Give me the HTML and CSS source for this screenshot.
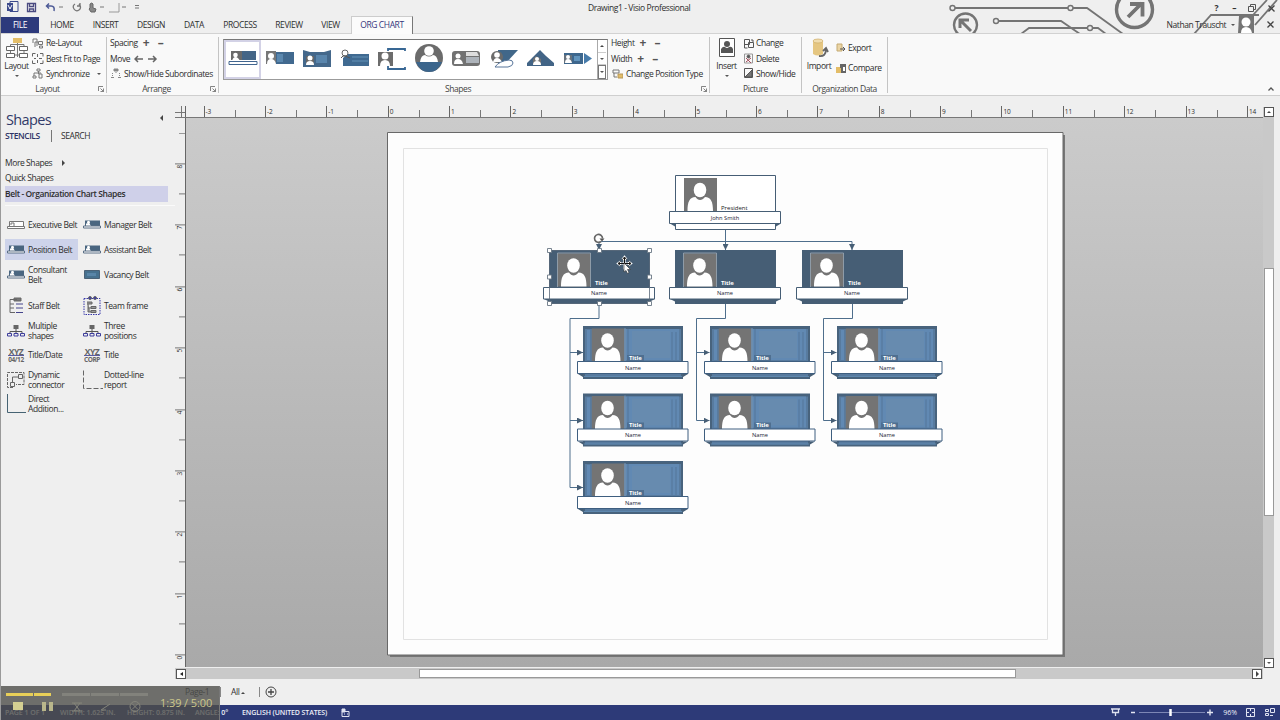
FILE: index.html
```
<!DOCTYPE html>
<html lang="en">
<head>
    <meta charset="UTF-8">
    <meta name="viewport" content="width=device-width, initial-scale=1.0">
    <title>Drawing1 - Visio Professional</title>
    <link rel="stylesheet" href="styles.css">
</head>
<body>
<svg class="sprite" width="0" height="0">
    <defs>
        <symbol id="person" viewBox="0 0 33 33">
            <rect width="33" height="33" fill="#747474"/>
            <path d="M3.500 33c0-9 2-14 8-14 2.500 4 6.500 4 9.500 0 6 0 8 5 8 14z" fill="#fff"/>
            <ellipse cx="16" cy="12" rx="6.300" ry="7.300" fill="#fff"/>
        </symbol>
        <symbol id="belt" viewBox="0 0 18 9">
            <path d="M2 .5h15v6H2z" fill="#4a6680"/>
            <path d="M3 6V3.500h1.500a1.500 1.500 0 1 1 2 0L8 6z" fill="#fff"/>
            <path d="M.5 6h17v2H.5z" fill="#fff" stroke="#5a6f85"/>
        </symbol>
        <symbol id="boxes" viewBox="0 0 18 12">
            <path d="M6.500 0h5v4h-5z" fill="#666"/>
            <path d="M9 4v4M3 9V6.500h12V9" fill="none" stroke="#555"/>
            <path d="M.5 8.500h4v2.500h-4zM7 8.500h4v2.500H7zM13.500 8.500h4v2.500h-4z" fill="#eee" stroke="#3d3d9c"/>
        </symbol>
        <symbol id="launcher" viewBox="0 0 6 6">
            <path d="M.5 5V.5H5M2.500 2.500l3 3M5.500 2.500v3h-3" fill="none" stroke="#666" stroke-width=".8"/>
        </symbol>
        <g id="manager">
            <path d="M6 0h101v54H6z" fill="#465e75"/>
            <use href="#person" x="14.500" y="3" width="33" height="34"/>
            <path d="M14.500 37V3H47.500v34" fill="none" stroke="#a9b3bd" stroke-width=".7"/>
            <path d="M1 49h5v2.500zM112 49h-5v2.500z" fill="#465e75"/>
            <path d="M.5 37.500h111v11.500H.5z" fill="#fff" stroke="#465e75"/>
            <text class="node-title" x="52" y="35">Title</text>
            <text class="node-name" x="56" y="44.500">Name</text>
        </g>
        <g id="position">
            <path d="M6 0h100v53H6z" fill="#48637d"/>
            <path d="M8 3h96v48H8z" fill="#587b9f"/>
            <path d="M10 4h3v30h-3zM49 3h53v31H49z" fill="#6189b3"/>
            <path d="M55 5h38v27H55z" fill="#678baf"/>
            <path d="M51 3v28M95 6v28M99 6v28" fill="none" stroke="#4e6f90" stroke-width=".7"/>
            <path d="M50 29h17v6H50z" fill="#4f6f90"/>
            <use href="#person" x="14.500" y="2" width="33" height="34"/>
            <path d="M48 2v34" stroke="#8fb0ce" stroke-width=".7"/>
            <path d="M1 48h5v3zM111 48h-5v3z" fill="#465e75"/>
            <path d="M.5 35.500h110.500v12H.5z" fill="#fff" stroke="#3f5f80"/>
            <path d="M7 50.500h98" stroke="#5f88ae"/>
            <text class="node-title" x="52" y="33.700">Title</text>
            <text class="node-name" x="56" y="43.500">Name</text>
        </g>
        <marker id="arrow" viewBox="0 0 6 6" refX="6" refY="3" markerWidth="6" markerHeight="6" markerUnits="userSpaceOnUse" orient="auto">
            <path d="M0 0l6 3-6 3z" fill="#465e75"/>
        </marker>
    </defs>
</svg>

<div class="app">
    <header class="titlebar">
        <svg class="circuit" viewBox="940 0 340 33" width="340" height="33">
            <g fill="none" stroke="#747474" stroke-width="1.800">
                <path d="M955 8h113M1073 8h14l36 26M999 21h62l19 13M1021 34l8-6h59M1093 28h5l8 6M1194 34l17-19h48M1253 15l14-15M1255 25l22-25"/>
                <g stroke-width="1.400">
                    <circle cx="952.500" cy="8" r="2.500"/>
                    <circle cx="1070.500" cy="8" r="2.500"/>
                    <circle cx="996" cy="21" r="2.500"/>
                    <circle cx="1090" cy="28" r="2.500"/>
                </g>
                <circle cx="965.500" cy="25" r="11.500" stroke-width="2.400"/>
                <path d="M971 31l-11-11M960 28v-8h9" stroke-width="3"/>
                <circle cx="1134.500" cy="9.500" r="18" stroke-width="3.400"/>
                <path d="M1128 17l14-14M1130 4h12.500v12.500" stroke-width="3.800"/>
            </g>
            <path d="M1239 16h15v17h-16z" fill="#747474"/>
            <circle cx="1246" cy="22" r="4.500" fill="#fff"/>
            <path d="M1241 33q0-6 5-6t6 6z" fill="#fff"/>
        </svg>
        <div class="quick-access">
            <svg width="145" height="14" viewBox="0 0 145 14" fill="none" stroke="#555">
                <path d="M9 1.500h8v10H9z" stroke="#3c4a8c"/>
                <path d="M6 3h6v8H6z" fill="#3c4a8c" stroke="none"/>
                <path d="M7 5l2 4 2-4" stroke="#fff"/>
                <path d="M26.500 3.500h8v8h-8zM28.500 3.500v3h4v-3M28.500 11v-2h4v2" stroke="#4a4a80" stroke-width="1.300"/>
                <path d="M48 3.500l-2.500 2.500L48 8.500M46 6h4q4 0 3 5" stroke="#4d5a96" stroke-width="1.500"/>
                <path d="M58 7h4M99 7h4M121 7h4M134 5.500h4M134 8h4" stroke="#777"/>
                <path d="M74 4q-3 2-1 5t5 1 0-6M79 3v3h-3" stroke="#777" stroke-width="1.300"/>
                <path d="M89 8V4q2-2 3 0v4l3 1-1 3h-4l-2-3z" fill="#888" stroke="#666"/>
                <path d="M108 12h10V3" stroke="#999"/>
            </svg>
        </div>
        <div class="window-title">Drawing1 - Visio Professional</div>
        <div class="window-buttons">
            <b>?</b><b>–</b>
            <svg width="8" height="8" fill="none" stroke="#555"><path d="M2.500 2.500v-2h5v5h-2M.5 2.500h5v5h-5z"/></svg>
            <svg width="7" height="7" stroke="#444" stroke-width="1.300"><path d="M.5.5l6 6M6.500.5l-6 6"/></svg>
        </div>
    </header>

    <nav class="tabs">
        <span class="tab tab-file">FILE</span>
        <span class="tab tab-home">HOME</span>
        <span class="tab tab-insert">INSERT</span>
        <span class="tab tab-design">DESIGN</span>
        <span class="tab tab-data">DATA</span>
        <span class="tab tab-process">PROCESS</span>
        <span class="tab tab-review">REVIEW</span>
        <span class="tab tab-view">VIEW</span>
        <span class="tab tab-active">ORG CHART</span>
        <span class="account">Nathan Trauscht <i class="caret"></i></span>
        <svg class="close-doc" width="7" height="7" stroke="#444" stroke-width="1.300"><path d="M.5.5l6 6M6.500.5l-6 6"/></svg>
    </nav>

    <section class="ribbon">
        <div class="group group-layout">
            <div class="group-body">
                <div class="big-button">
                    <svg width="22" height="23" fill="none" stroke="#777">
                        <path d="M7 1h9v5H7z" fill="#e3bd68" stroke="none"/>
                        <path d="M11.500 6v14M4.500 9V7.500H18V9M4.500 13v3M18 13v3M9 18h5"/>
                        <path d="M.5 9.500h8v4h-8zM13.500 9.500h8v4h-8zM.5 16.500h8v4h-8zM13.500 16.500h8v4h-8z" fill="#fff" stroke="#666"/>
                    </svg>
                    <span>Layout</span><i class="caret"></i>
                </div>
                <div class="rows">
                    <div class="row"><svg width="12" height="11" fill="none" stroke="#777"><path d="M1 5V1h4M3 9V4h3M6.500 3.500h4v3h-4zM7.500 8h3v2h-3zM5 1v7"/></svg>Re-Layout</div>
                    <div class="row"><svg width="12" height="11" fill="none" stroke="#666"><path d="M.5 3.500v-3h3M8 .5h3v3M11 7.500v3H8M3.500 10.500h-3v-3M5.500 1v3M5.500 7v3M2 5.500h2M7 5.500h3"/></svg>Best Fit to Page</div>
                    <div class="row"><svg width="12" height="11" fill="none" stroke="#777"><path d="M5 1h3v2H5zM1 8h3v2H1zM7 6h3v4H7zM6.500 3v3M2 8V5h7"/></svg>Synchronize <i class="caret sync-caret"></i></div>
                </div>
            </div>
            <div class="group-label">Layout</div>
            <svg class="launcher"><use href="#launcher"/></svg>
        </div>

        <div class="group group-arrange">
            <div class="group-body">
                <div class="rows">
                    <div class="row">Spacing <b class="sign">+</b><b class="sign">–</b></div>
                    <div class="row">Move <svg class="arrows" width="24" height="8" fill="none" stroke="#666" stroke-width="1.500"><path d="M9 4H1M4 1L1 4l3 3M14 4h8M19 1l3 3-3 3"/></svg></div>
                    <div class="row"><svg class="subordinates" width="12" height="11" fill="none" stroke="#888"><path d="M4 1h4v2H4z" fill="#888"/><path d="M2.500 5v3M6 4v2M9.500 5v3" stroke-dasharray="1 1"/><path d="M1 9.500h3M8 9.500h3"/></svg>Show/Hide Subordinates</div>
                </div>
            </div>
            <div class="group-label">Arrange</div>
            <svg class="launcher"><use href="#launcher"/></svg>
        </div>

        <div class="group group-shapes">
            <div class="group-body">
                <div class="gallery">
                    <div class="style selected"><svg width="30" height="30"><path d="M3 8h25v9H3z" fill="#446586"/><path d="M3 8h11v9H3z" fill="#6a6a6a"/><circle cx="7.500" cy="12" r="2.300" fill="#fff"/><path d="M4 18q1-4 3.500-4t4.500 4z" fill="#fff"/><path d="M1 18.500h28v3H1z" fill="#fff" stroke="#41658f"/></svg></div>
                    <div class="style"><svg width="30" height="30"><path d="M1 8h10v13H1z" fill="#777"/><path d="M11 9h18v12H11z" fill="#41698f"/><circle cx="6" cy="13" r="3" fill="#fff"/><path d="M2 21q0-5 4-5t5 5z" fill="#fff"/><path d="M12 11h6v8h-6z" fill="#5a87ae"/></svg></div>
                    <div class="style"><svg width="30" height="30"><path d="M1 7l7 2h14l7-2v17H1z" fill="#44688b"/><path d="M4 13h8v9H4z" fill="#666"/><circle cx="8" cy="15" r="2.500" fill="#fff"/><path d="M4 22q0-4 4-4t4 4z" fill="#fff"/><path d="M14 12h11v8H14z" fill="#5985ac"/></svg></div>
                    <div class="style"><svg width="30" height="30"><path d="M8 11h21v12H3v-8z" fill="#406a91"/><path d="M12 14h16M12 18h16" stroke="#6391b6"/><circle cx="5" cy="10" r="3" fill="#fff" stroke="#666"/><path d="M1 15q2-3 4-2l5 2" fill="none" stroke="#555"/></svg></div>
                    <div class="style"><svg width="30" height="30"><path d="M1 9h15v14H1z" fill="#6c6c6c"/><circle cx="8" cy="13" r="3.500" fill="#fff"/><path d="M3 23q0-6 5-6t5 6z" fill="#fff"/><path d="M11 8V6h17v2M11 23v3h17v-2" fill="none" stroke="#386794" stroke-width="1.800"/></svg></div>
                    <div class="style"><svg width="30" height="30"><circle cx="15" cy="15" r="14" fill="#6b6b6b"/><path d="M2 19h26q-4 10-13 10T2 19z" fill="#3b658c"/><circle cx="15" cy="8" r="4.800" fill="#fff"/><path d="M6 19q1-7 5-7 4 3 8 0 4 0 5 7z" fill="#fff"/></svg></div>
                    <div class="style"><svg width="30" height="30"><rect x="1" y="8" width="28" height="15" rx="3" fill="#727272"/><circle cx="7" cy="13" r="2.500" fill="#fff"/><path d="M3 21q0-5 4-5t5 5z" fill="#fff"/><path d="M15 9h11l2 4H15z" fill="#ddd"/><path d="M15 14h13v6H15z" fill="#adb3ba"/></svg></div>
                    <div class="style"><svg width="30" height="30"><path d="M9 7h20L17 20H9z" fill="#416789"/><circle cx="8" cy="14" r="6" fill="#6b6b6b"/><circle cx="8" cy="12" r="2.800" fill="#fff"/><path d="M4 19q1-4 4-4t5 4z" fill="#fff"/><path d="M20 17q4 0 4 3t-5 4H6q4-6 14-7z" fill="#fff" stroke="#57759a"/></svg></div>
                    <div class="style"><svg width="30" height="30"><path d="M14 7l6 6 8 7v3H1v-3l6-6z" fill="#426486"/><path d="M7 16l3-3 5 3v6H7z" fill="#727272"/><circle cx="11" cy="16" r="2" fill="#fff"/><path d="M7 22q0-4 4-4t4 4z" fill="#fff"/></svg></div>
                    <div class="style"><svg width="30" height="30"><path d="M1 10h19v11H1z" fill="#3e678d"/><path d="M21 10l8 5.500-8 5.500z" fill="#477baa"/><path d="M1 12h8v8H1z" fill="#66717c"/><circle cx="5" cy="14" r="2" fill="#fff"/><path d="M2 20q0-4 3-4t4 4z" fill="#fff"/><path d="M11 13h6v5h-6z" fill="#6194bd"/></svg></div>
                    <div class="gallery-nav"><span><i class="caret up"></i></span><span><i class="caret"></i></span><span class="more"><i class="caret"></i></span></div>
                </div>
                <div class="rows rows-size">
                    <div class="row">Height <b class="sign">+</b><b class="sign">–</b></div>
                    <div class="row">Width <b class="sign">+</b><b class="sign">–</b></div>
                    <div class="row"><svg class="change-type" width="11" height="10" fill="none" stroke="#777"><path d="M1 1h6v3H1zM2 4v4h3"/><path d="M6 5h5v4H6z" fill="#e3bd68" stroke="#b8995a"/></svg>Change Position Type</div>
                </div>
            </div>
            <div class="group-label">Shapes</div>
            <svg class="launcher"><use href="#launcher"/></svg>
        </div>

        <div class="group group-picture">
            <div class="group-body">
                <div class="big-button">
                    <svg width="22" height="23"><path d="M3.500 1.500h15v18h-15z" fill="#fff" stroke="#555"/><circle cx="11" cy="7" r="3" fill="#555"/><path d="M5 16v-4q2-3 4-2 2 2 4 0 3-1 4 2v4z" fill="#555"/></svg>
                    <span>Insert</span><i class="caret"></i>
                </div>
                <div class="rows">
                    <div class="row"><svg width="12" height="11" fill="none" stroke="#555"><path d="M1.500 1.500h5v5h-5zM5.500 4.500h5v5h-5zM1.500 6v4h3M8 2h2v2"/></svg>Change</div>
                    <div class="row"><svg width="12" height="11" fill="none" stroke="#666"><path d="M1.500 1v9h8V1z" stroke="#999"/><circle cx="5.500" cy="3.500" r="1.500" fill="#555"/><path d="M3 9l5-4M3 5l5 5" stroke="#a34d5b"/></svg>Delete</div>
                    <div class="row"><svg width="12" height="11" fill="none" stroke="#555"><path d="M1.500.5h8v9h-8z"/><path d="M2 9l7-7v7z" fill="#777"/></svg>Show/Hide</div>
                </div>
            </div>
            <div class="group-label">Picture</div>
        </div>

        <div class="group group-data">
            <div class="group-body">
                <div class="big-button">
                    <svg width="22" height="23"><path d="M5 4v13q5 3 10 0V4z" fill="#e5c681"/><ellipse cx="10" cy="4" rx="5" ry="2" fill="#f0dcae" stroke="#cfae67" stroke-width=".7"/><path d="M11 19q7 1 7-7M15 14l3-3 2 4" fill="none" stroke="#666" stroke-width="1.800"/></svg>
                    <span>Import</span>
                </div>
                <div class="rows rows-data">
                    <div class="row"><svg width="12" height="11" fill="none"><path d="M2 2h5v7H2z" fill="#ebd5a5" stroke="#c4aa73"/><path d="M5 7h5M8 5l2 2-2 2" stroke="#555"/></svg>Export</div>
                    <div class="row"><svg width="12" height="11"><path d="M1 4h5v6H1z" fill="#e3bd68"/><path d="M5 1h6v9H6V5H5z" fill="#666"/><path d="M8 4h2v4H8z" fill="#fff"/></svg>Compare</div>
                </div>
            </div>
            <div class="group-label">Organization Data</div>
        </div>
        <svg class="collapse" width="6" height="4" fill="none" stroke="#555" stroke-width="1.300"><path d="M.5 3.500L3 1l2.500 2.500"/></svg>
    </section>

    <main class="workspace">
        <aside class="sidebar">
            <div class="sidebar-head"><h2>Shapes</h2><i class="collapse-left"></i></div>
            <div class="sidebar-tabs"><b>STENCILS</b><span>SEARCH</span></div>
            <div class="sidebar-line">More Shapes <i class="caret right"></i></div>
            <div class="sidebar-line">Quick Shapes</div>
            <div class="stencil-name">Belt - Organization Chart Shapes</div>
            <div class="stencils">
                <div class="stencil"><svg width="18" height="20"><path d="M2.500 6.500h14v5h-14zM.5 11.500h17v2H.5zM4 8h3M4 10v-2M7 8v3" fill="#fff" stroke="#777"/></svg>Executive Belt</div>
                <div class="stencil"><svg width="18" height="9"><use href="#belt"/></svg>Manager Belt</div>
                <div class="stencil current"><svg width="18" height="9"><use href="#belt"/></svg>Position Belt</div>
                <div class="stencil"><svg width="18" height="9"><use href="#belt"/></svg>Assistant Belt</div>
                <div class="stencil"><svg width="18" height="9"><use href="#belt"/></svg><span>Consultant<br>Belt</span></div>
                <div class="stencil"><svg width="18" height="11"><path d="M1.500 1.500h15v8h-15z" fill="#47718f" stroke="#4b6176"/><path d="M4 4h9v3H4z" fill="#5985a8"/></svg>Vacancy Belt</div>
                <div class="stencil first-of-kind"><svg width="18" height="18" fill="none" stroke="#666"><path d="M7 1h7v3H7z" fill="#777"/><path d="M10 2.500H3v13h5M3 7h4M3 11h4"/><path d="M9 7h7M9 11h7M9 15.500h7" stroke="#44448c"/></svg>Staff Belt</div>
                <div class="stencil first-of-kind"><svg width="18" height="20" fill="none" stroke="#666"><path d="M1 2.500h16v16H1z" stroke="#3737a8" stroke-dasharray="1.500 1"/><path d="M4 6h5v2H4M5 8v8h3M5 12h3M8 10.500h5v2H8zM8 14.500h5v2H8z" fill="#999"/><circle cx="7" cy="2" r="1.500" fill="#3535b0"/><circle cx="12" cy="2" r="1.500" fill="#3535b0"/></svg>Team frame</div>
                <div class="stencil"><svg width="18" height="12"><use href="#boxes"/></svg><span>Multiple<br>shapes</span></div>
                <div class="stencil"><svg width="18" height="12"><use href="#boxes"/></svg><span>Three<br>positions</span></div>
                <div class="stencil"><span class="xyz"><b>XYZ</b><b>04/12</b></span>Title/Date</div>
                <div class="stencil"><span class="xyz"><b>XYZ</b><b>CORP</b></span>Title</div>
                <div class="stencil"><svg width="18" height="18" fill="none" stroke="#666"><path d="M7 1.500H.5v15h6M8 1.500h9v12H9" stroke-dasharray="3 1"/><path d="M11.500 3.500h4v4h-4zM3.500 11.500h4v4h-4zM5.500 11V6h6"/></svg><span>Dynamic<br>connector</span></div>
                <div class="stencil"><svg width="20" height="20" fill="none" stroke="#666"><path d="M.5.5v18H20" stroke-dasharray="5 2"/></svg><span>Dotted-line<br>report</span></div>
                <div class="stencil"><svg width="19" height="20" fill="none" stroke="#466373"><path d="M.5 0v18.500H19"/></svg><span>Direct<br>Addition...</span></div>
            </div>
        </aside>

        <div class="editor">
            <div class="ruler-top">
                <span class="ruler-corner"></span>
                <span class="inch">-3</span><span class="inch">-2</span><span class="inch">-1</span><span class="inch">0</span><span class="inch">1</span><span class="inch">2</span><span class="inch">3</span><span class="inch">4</span><span class="inch">5</span><span class="inch">6</span><span class="inch">7</span><span class="inch">8</span><span class="inch">9</span><span class="inch">10</span><span class="inch">11</span><span class="inch">12</span><span class="inch">13</span><span class="inch">14</span>
            </div>
            <div class="canvas-row">
                <div class="ruler-left">
                    <span class="inch">8</span><span class="inch">7</span><span class="inch">6</span><span class="inch">5</span><span class="inch">4</span><span class="inch">3</span><span class="inch">2</span><span class="inch">1</span><span class="inch">0</span>
                </div>
                <svg class="canvas" viewBox="186 118 1077 549" width="1077" height="549">
                    <defs>
                        <linearGradient id="desk" x1="0" y1="0" x2="0" y2="1">
                            <stop offset="0" stop-color="#cbcbcb"/>
                            <stop offset="1" stop-color="#a9a9a9"/>
                        </linearGradient>
                    </defs>
                    <rect x="186" y="118" width="1077" height="549" fill="url(#desk)"/>
                    <path d="M390 135h675v522H390z" fill="#767676"/>
                    <path d="M387.500 132.500h675.500v522.500H387.500z" fill="#fdfdfd" stroke="#686868"/>
                    <path d="M403.500 148.500h644v491h-644z" fill="none" stroke="#e2e2e2"/>

                    <!-- connectors -->
                    <g class="wires">
                        <path d="M725.500 230v20" marker-end="url(#arrow)"/>
                        <path d="M725.500 241.500H599V250" marker-end="url(#arrow)"/>
                        <path d="M725.500 241.500H852V250" marker-end="url(#arrow)"/>
                        <path d="M599 304v14.500h-29V487.500h13" marker-end="url(#arrow)"/>
                        <path d="M570 352.500h13" marker-end="url(#arrow)"/>
                        <path d="M570 420.500h13" marker-end="url(#arrow)"/>
                        <path d="M725.500 304v14.500h-29V420.500h13" marker-end="url(#arrow)"/>
                        <path d="M696.500 352.500h13" marker-end="url(#arrow)"/>
                        <path d="M852.500 304v14.500h-29V420.500h13" marker-end="url(#arrow)"/>
                        <path d="M823.500 352.500h13" marker-end="url(#arrow)"/>
                    </g>

                    <!-- president -->
                    <path d="M675.500 175.500h100v54h-100z" fill="#fff" stroke="#465e75"/>
                    <use href="#person" x="684" y="178" width="33" height="33"/>
                    <path d="M670 223.500h5v3zM781 223.500h-5v3z" fill="#465e75"/>
                    <path d="M669.500 211.500h111v12h-111z" fill="#fff" stroke="#465e75"/>
                    <text class="node-role" x="721" y="209.500">President</text>
                    <text class="node-name" x="725" y="219.500">John Smith</text>

                    <use href="#manager" x="543" y="250"/>
                    <use href="#manager" x="669" y="250"/>
                    <use href="#manager" x="796" y="250"/>

                    <use href="#position" x="577" y="326"/>
                    <use href="#position" x="704" y="326"/>
                    <use href="#position" x="831" y="326"/>
                    <use href="#position" x="577" y="393.500"/>
                    <use href="#position" x="704" y="393.500"/>
                    <use href="#position" x="831" y="393.500"/>
                    <use href="#position" x="577" y="461"/>

                    <!-- selection -->
                    <path d="M549.500 250.500h100v53h-100z" fill="none" stroke="#5a6a7a" stroke-width=".8"/>
                    <g fill="#fff" stroke="#6a7784" stroke-width=".9">
                        <path d="M547.500 248.500h4v4h-4zM597.500 248.500h4v4h-4zM647.500 248.500h4v4h-4zM547.500 275h4v4h-4zM647.500 275h4v4h-4zM547.500 301.500h4v4h-4zM597.500 301.500h4v4h-4zM647.500 301.500h4v4h-4z"/>
                    </g>
                    <path d="M601 241.500a4 4 0 1 1 1.500-3" fill="#fff" stroke="#666" stroke-width="1.700"/>
                    <path d="M599.500 238.500h5l-2.500 3z" fill="#555"/>
                    <g class="cursor">
                        <path d="M624.500 257.500v12M618.500 263.500h12M622.500 259.500l2-2.500 2 2.500M620.500 261.500l-2.500 2 2.500 2M628.500 261.500l2.500 2-2.500 2" fill="none" stroke="#fff" stroke-width="2.200"/>
                        <path d="M624.500 257.500v12M618.500 263.500h12M622.500 259.500l2-2.500 2 2.500M620.500 261.500l-2.500 2 2.500 2M628.500 261.500l2.500 2-2.500 2" fill="none" stroke="#111"/>
                        <path d="M624 263v9l2-1.500 1.500 3 1.500-1-1.500-3h3z" fill="#fff" stroke="#333" stroke-width=".6"/>
                    </g>
                </svg>
            </div>
            <div class="scroll-h">
                <span class="scroll-button"><i class="caret left"></i></span>
                <span class="thumb"></span>
                <span class="scroll-button"><i class="caret right"></i></span>
            </div>
            <div class="page-tabs">
                <span class="page-one">Page-1</span>
                <span class="page-all">All <i class="caret up"></i></span>
                <svg width="12" height="12" fill="none" stroke="#444"><circle cx="6" cy="6" r="5"/><path d="M6 3v6M3 6h6" stroke-width="1.300"/></svg>
            </div>
        </div>

        <div class="scroll-v">
            <span class="scroll-button"><i class="caret up"></i></span>
            <span class="thumb"></span>
            <span class="scroll-button"><i class="caret"></i></span>
        </div>
    </main>

    <footer class="statusbar">
        <span class="st-page">PAGE 1 OF 1</span>
        <span class="st-width">WIDTH: 1.625 IN.</span>
        <span class="st-height">HEIGHT: 0.875 IN.</span>
        <span class="st-angle">ANGLE: 0°</span>
        <span class="st-lang">ENGLISH (UNITED STATES)</span>
        <svg width="9" height="9" fill="none" stroke="#dfe2f0"><path d="M1 3.500h7v5H1zM3 6h1M6 6h1"/><path d="M1 1h3v3H1z" fill="#dfe2f0"/></svg>
        <div class="zoom">
            <svg width="10" height="9" fill="none" stroke="#dfe2f0"><path d="M0 1h9M1.500 1v3.500h6V1M4.500 5v3" stroke-width="1.300"/></svg>
            <svg class="zoom-slider" width="84" height="9" stroke="#e4e6f2"><path d="M0 4.500h4M76 4.500h6M79 1.500v6" stroke-width="1.400"/><path d="M8 4.500h66" stroke="#7d87b5"/><path d="M39.500 1v7" stroke="#fff" stroke-width="2.500"/></svg>
            <span class="zoom-value">96%</span>
            <svg width="10" height="9" fill="none" stroke="#dfe2f0"><path d="M.5.5h8v8h-8zM4.500 0v3M4.500 6v3M0 4.500h3M6 4.500h3"/></svg>
            <svg class="switch" width="10" height="9" fill="none" stroke="#dfe2f0"><path d="M.5 1.500h3v2h-3zM5.500.5h4v4h-4zM.5 5.500h3v2h-3zM5 7.500h3"/></svg>
        </div>
    </footer>

    <div class="player">
        <div class="progress"><i class="played"></i><i class="played short"></i><i></i><i></i><i></i></div>
        <div class="controls">
            <svg width="150" height="16" fill="none" stroke="#85857b">
                <path d="M13 6h10v8H13z" fill="#d4cf92" stroke="none"/>
                <path d="M42 6h4v9h-4zM49 6h4v9h-4z" fill="#b9b68b" stroke="none"/>
                <path d="M72 7h10M72 15h10M74 7l6 8M80 7l-6 8M101 14l9-6M102 14h4"/>
                <circle cx="135" cy="10.500" r="5"/><path d="M132 7.500l6 6M138 7.500l-6 6"/>
            </svg>
            <span class="time">1:39 / 5:00</span>
        </div>
    </div>
</div>
</body>
</html>
```
FILE: styles.css
```
* {
    box-sizing: border-box;
}
body {
    margin: 0;
    font-family: "Open Sans", "Noto Sans", sans-serif;
    font-size: 8.5px;
    font-weight: 500;
    line-height: 10px;
    letter-spacing: -0.42px;
    color: #2e2e2e;
}
svg {
    flex: none;
    display: block;
}
.sprite {
    position: absolute;
}
.app {
    position: relative;
    width: 1280px;
    height: 720px;
    overflow: hidden;
    display: flex;
    flex-direction: column;
    background: #efefef;
    border-left: 1px solid #9a9a9a;
}

/* carets */
.caret {
    flex: none;
    display: inline-block;
    border: 2px solid transparent;
    border-top: 2.5px solid #555;
    border-bottom: 0;
}
.caret.up {
    border-top: 0;
    border-bottom: 2.5px solid #444;
}
.caret.right {
    border: 3px solid transparent;
    border-left: 3.5px solid #444;
    border-right: 0;
}
.caret.left {
    border: 2.5px solid transparent;
    border-right: 3px solid #222;
    border-left: 0;
}

/* title bar and tabs */
.titlebar {
    height: 17px;
    display: flex;
    align-items: flex-start;
}
.circuit {
    position: absolute;
    right: 0;
    top: 0;
}
.quick-access {
    width: 587px;
}
.window-title {
    padding-top: 3px;
    flex: 1;
}
.window-buttons {
    position: relative;
    display: flex;
    gap: 12px;
    align-items: center;
    padding: 3px 5px 0 0;
}
.window-buttons b:first-child {
    margin-right: 2px;
}
.tabs {
    position: relative;
    height: 16px;
    display: flex;
    line-height: 16px;
}
.tab {
    text-align: center;
    flex: none;
}
.tab-file {
    width: 38px;
    background: #2d3a7c;
    color: #fff;
}
.tab-home { width: 46px; }
.tab-insert { width: 41px; }
.tab-design { width: 50px; }
.tab-data { width: 36px; }
.tab-process { width: 56px; }
.tab-review { width: 42px; }
.tab-view { width: 41px; }
.tab-active {
    width: 62px;
    margin-top: -1px;
    height: 18px;
    background: #fbfbfb;
    border: 1px solid #ccc;
    border-right-color: #777;
    border-bottom: 0;
    color: #35367c;
    z-index: 1;
}
.account {
    flex: 1;
    text-align: right;
}
.account .caret {
    margin: 0 0 2px 3px;
}
.close-doc {
    margin: 4px 6px 0 32px;
}

/* ribbon */
.ribbon {
    position: relative;
    height: 63px;
    display: flex;
    background: #f9f9f9;
    border-top: 1px solid #d2d2d2;
    border-bottom: 1px solid #cfcfcf;
}
.group {
    position: relative;
    height: 56px;
    margin-top: 3px;
    border-right: 1px solid #c4c4c4;
}
.group-layout { width: 106px; }
.group-arrange { width: 112px; }
.group-shapes { width: 491px; }
.group-picture { width: 92px; }
.group-data { width: 86px; }
.group-body {
    display: flex;
    height: 46px;
}
.group-label {
    text-align: center;
    line-height: 11px;
    padding-right: 12px;
    color: #444;
}
.group-picture .group-label,
.group-data .group-label {
    padding-right: 0;
}
.launcher {
    position: absolute;
    width: 6px;
    height: 6px;
    right: 2px;
    bottom: 1px;
}
.big-button {
    display: flex;
    flex-direction: column;
    align-items: center;
    width: 31px;
}
.big-button span {
    line-height: 12px;
}
.big-button .caret {
    margin-top: 3px;
}
.rows {
    display: flex;
    flex-direction: column;
    margin-top: -1.5px;
}
.row {
    height: 15.4px;
    display: flex;
    align-items: center;
    white-space: nowrap;
}
.group-layout .row svg {
    margin-right: 2px;
}
.sync-caret {
    margin-left: 7px;
}
.group-arrange .rows {
    padding-left: 3px;
}
.sign {
    font-size: 12px;
    color: #555;
    width: 8px;
    margin-left: 5px;
    margin-right: 2px;
}
.arrows {
    margin-left: 4px;
}
.subordinates {
    margin-right: 2px;
}
.gallery {
    width: 385px;
    height: 41px;
    margin: 2px 3px 0 4px;
    display: flex;
    background: #fff;
    border: 1px solid #9b9b9b;
    border-top-color: #777;
}
.style {
    width: 37.3px;
    display: flex;
    justify-content: center;
    padding: 3px 0 0;
}
.style.selected {
    border: 2px solid #d3d2e6;
    padding-top: 1px;
}
.gallery-nav {
    width: 9px;
    border-left: 1px solid #aaa;
    display: flex;
    flex-direction: column;
}
.gallery-nav span {
    flex: 1;
    display: flex;
    align-items: center;
    justify-content: center;
    border-bottom: 1px solid #ccc;
}
.gallery-nav .more {
    border: 1px solid #777;
}
.change-type {
    margin: 0 3px 0 1px;
}
.group-picture .big-button {
    width: 33px;
}
.group-picture .row svg {
    margin-right: 1px;
}
.group-data .big-button {
    width: 34px;
}
.rows-data {
    gap: 5px;
    padding-top: 4.5px;
}
.rows-data .row svg {
    margin-right: 0;
}
.rows-data .row:first-child svg {
    margin-left: -1px;
    margin-right: 1px;
}
.rows-data .row:last-child svg {
    margin-left: -1px;
    margin-right: 1px;
}
.collapse {
    position: absolute;
    right: 6px;
    bottom: 4px;
}

/* sidebar */
.workspace {
    height: 609px;
    display: flex;
}
.sidebar {
    width: 174px;
    padding-left: 4px;
}
.sidebar-head {
    display: flex;
    justify-content: space-between;
    padding-top: 14px;
}
.sidebar-head h2 {
    margin: 0 0 0 1px;
    font-size: 14.5px;
    font-weight: 400;
    line-height: 20px;
    letter-spacing: -0.65px;
    color: #313a68;
}
.collapse-left {
    border: 3px solid transparent;
    border-right: 3px solid #444;
    border-left: 0;
    height: 6px;
    margin: 5px 12px 0 0;
}
.sidebar-tabs {
    display: flex;
    margin: 0 0 13px;
    line-height: 12px;
}
.sidebar-tabs b {
    color: #2e3467;
    font-weight: 600;
    width: 47px;
    border-right: 1px solid #777;
}
.sidebar-tabs span {
    padding-left: 9px;
}
.sidebar-line {
    height: 15px;
    line-height: 15px;
    display: flex;
    align-items: center;
}
.sidebar-line .caret {
    margin-left: 10px;
}
.stencil-name {
    width: 163px;
    height: 16px;
    margin-top: 1px;
    line-height: 15px;
    font-weight: 600;
    letter-spacing: -0.4px;
    background: #cfd0e9;
}
.stencils {
    display: grid;
    grid-template-columns: 76px 84px;
    grid-template-rows: 25px 25px 25px 31px 25px 24px 25px 24px;
    margin-top: 3px;
    padding-top: 6px;
    border-top: 1px solid #fafafa;
}
.stencil {
    display: flex;
    align-items: center;
    padding-left: 2px;
    white-space: nowrap;
}
.stencil > svg,
.stencil .xyz {
    width: 18px;
    margin-right: 3px;
    overflow: visible;
}
.stencil.current {
    background: #cdd3ea;
    margin: 2px 3px 2px 0;
}
.stencil.first-of-kind {
    padding-top: 6px;
}
.xyz {
    display: flex;
    flex-direction: column;
    align-items: center;
    color: #666;
    line-height: 7px;
}
.xyz b:last-child {
    font-size: 6.5px;
    border-top: 1px solid #5c5ca0;
}

/* rulers */
.editor {
    width: 1088px;
    display: flex;
    flex-direction: column;
}
.ruler-top {
    height: 22px;
    display: flex;
    align-items: flex-end;
    overflow: hidden;
    border-bottom: 1px solid #777;
    font-size: 6.5px;
    letter-spacing: 0;
}
.ruler-corner {
    flex: none;
    width: 11px;
    height: 11px;
    margin-right: 17.5px;
    border-right: 1px solid #666;
    background: linear-gradient(#777, #777) 6px 0 / 1px 100% no-repeat, linear-gradient(#777, #777) 0 6px / 100% 1px no-repeat;
}
.ruler-top .inch {
    flex: none;
    width: 61.38px;
    height: 11px;
    padding-left: 1px;
    line-height: 11px;
    border-left: 1px solid #666;
    background: linear-gradient(#777, #777) 30px 100% / 1px 7px no-repeat;
}
.canvas-row {
    display: flex;
    height: 549px;
}
.ruler-left {
    width: 11px;
    overflow: hidden;
    padding-top: 45px;
    border-right: 1px solid #666;
    font-size: 6.5px;
    background: linear-gradient(#999, #999) 100% 15px / 6px 1px no-repeat;
}
.ruler-left .inch {
    display: block;
    height: 61.4px;
    width: 10px;
    padding-bottom: 1px;
    line-height: 9px;
    writing-mode: vertical-rl;
    transform: rotate(180deg);
    text-align: right;
    border-bottom: 1px solid #777;
    background: linear-gradient(#777, #777) 0 30px / 6px 1px no-repeat;
}

/* drawing */
.node-title {
    font-size: 6px;
    font-weight: 700;
    letter-spacing: -0.15px;
    fill: #fff;
}
.node-role {
    font-size: 6px;
    letter-spacing: 0;
    fill: #222;
}
.node-name {
    font-size: 5.7px;
    letter-spacing: 0;
    text-anchor: middle;
    fill: #223;
}
.wires {
    fill: none;
    stroke: #4e6e8c;
}

/* scroll bars */
.scroll-button {
    flex: none;
    width: 10px;
    height: 10px;
    display: flex;
    align-items: center;
    justify-content: center;
    background: #fff;
    border: 1px solid #555;
}
.scroll-h {
    display: flex;
    justify-content: space-between;
    height: 12px;
    padding: 1px 1px 1px;
    background: #c9c9c9;
    border-top: 1px solid #eee;
}
.scroll-h .thumb {
    width: 597px;
    margin-left: -4px;
    background: #fff;
    border: 1px solid #999;
}
.scroll-v {
    width: 11px;
    height: 561px;
    margin-top: 11px;
    display: flex;
    flex-direction: column;
    justify-content: space-between;
    padding-left: 1px;
    background: #c9c9c9;
}
.scroll-v .thumb {
    height: 248px;
    margin-top: 8px;
    background: #fff;
    border: 1px solid #999;
}
.page-tabs {
    height: 25px;
    display: flex;
    align-items: center;
    padding-left: 10px;
}
.page-one {
    width: 36px;
    border-right: 1px solid #888;
}
.page-all {
    width: 39px;
    padding-left: 10px;
    margin-right: 5px;
    border-right: 1px solid #888;
}
.page-all .caret {
    margin-bottom: 1px;
}

/* status bar */
.statusbar {
    height: 15px;
    display: flex;
    align-items: center;
    background: #2d3a78;
    color: #eef0f8;
    font-size: 7px;
    font-weight: 600;
    letter-spacing: -0.05px;
    white-space: nowrap;
}
.st-page { width: 55px; padding-left: 4px; }
.st-width { width: 71px; padding-left: 4px; }
.st-height { width: 68px; }
.st-angle { width: 47px; }
.st-lang { width: 99px; letter-spacing: -0.1px; }
.zoom {
    flex: 1;
    display: flex;
    align-items: center;
    justify-content: flex-end;
    padding-right: 5px;
}
.zoom-slider {
    margin-left: 10px;
}
.zoom-value {
    margin: 0 9px 0 8px;
    font-weight: 400;
}
.switch {
    margin-left: 9px;
}

/* video player bar over the window corner */
.player {
    position: absolute;
    left: -1px;
    bottom: 0;
    width: 220px;
    height: 34px;
    padding-top: 7px;
    background: rgba(78, 78, 74, 0.8);
    border-right: 1px solid #777;
}
.progress {
    display: flex;
    gap: 1px;
    padding-left: 6px;
}
.progress i {
    width: 28px;
    height: 3px;
    background: #82827c;
}
.progress .played {
    width: 27px;
    background: #e8cf58;
}
.progress .short {
    width: 17px;
    margin-right: 10px;
}
.controls {
    display: flex;
    align-items: flex-start;
}
.time {
    margin-left: 10px;
    font-size: 11px;
    font-weight: 400;
    line-height: 13px;
    letter-spacing: -0.1px;
    color: #cbc78c;
}
```
